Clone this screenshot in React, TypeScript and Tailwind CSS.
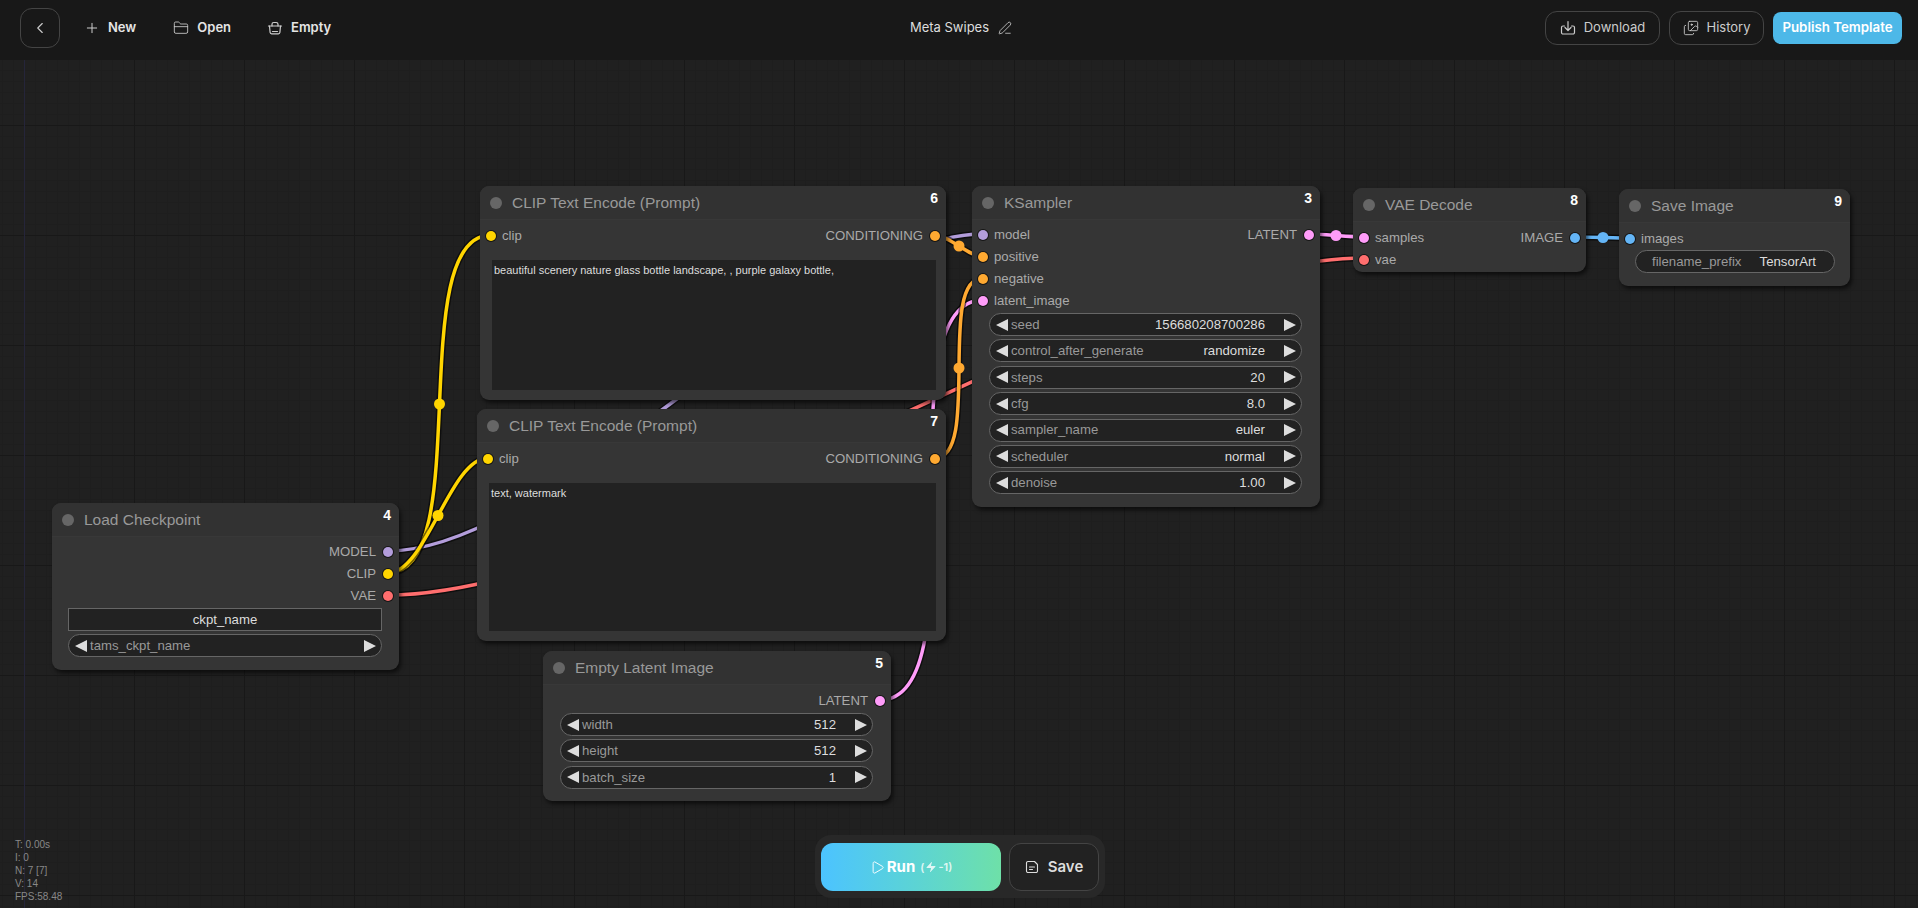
import React from 'react';
import { ChevronLeft, FolderClosed, Images, PenLine, Play, Plus, Zap } from 'lucide-react';

// link colours, by slot type
const MODEL = '#b39ddb';
const CLIP = '#ffd500';
const VAE = '#ff6e6e';
const COND = '#ffa931';
const LATENT = '#ff9cf9';
const IMAGE = '#64b5f6';

const links: { from: number[]; to: number[]; color: string }[] = [
  { from: [388, 551], to: [983, 234], color: MODEL },
  { from: [388, 595], to: [1364, 258], color: VAE },
  { from: [880, 700], to: [983, 300], color: LATENT },
  { from: [935, 458], to: [983, 278], color: COND },
  { from: [388, 573], to: [491, 235], color: CLIP },
  { from: [388, 573], to: [488, 458], color: CLIP },
  { from: [935, 235], to: [983, 257], color: COND },
  { from: [1308, 234], to: [1364, 237], color: LATENT },
  { from: [1575, 237], to: [1631, 238], color: IMAGE },
];

const Links = () => (
  <svg className="absolute left-0 top-0 w-[1918px] h-[848px]" viewBox="0 60 1918 848" fill="none">
    {links.map((l, i) => {
      const [x1, y1] = l.from;
      const [x2, y2] = l.to;
      const h = Math.hypot(x2 - x1, y2 - y1) * 0.25;
      const d = `M${x1} ${y1}C${x1 + h} ${y1} ${x2 - h} ${y2} ${x2} ${y2}`;
      return (
        <g key={i}>
          <path d={d} stroke="#000" strokeOpacity={0.55} strokeWidth={6.5} />
          <path d={d} stroke={l.color} strokeWidth={3.5} />
          <circle cx={(x1 + x2) / 2} cy={(y1 + y2) / 2} r={5.5} fill={l.color} />
        </g>
      );
    })}
  </svg>
);

const Dot = ({ color }: { color: string }) => (
  <span className={`w-[10px] h-[10px] shrink-0 rounded-full ring-1 ring-black/60 ${color}`} />
);

const Input = ({ label, color }: { label: string; color: string }) => (
  <div className="flex items-center gap-[6px] pl-[6px] text-[#aaa]">
    <Dot color={color} />
    <span>{label}</span>
  </div>
);

const Output = ({ label, color }: { label: string; color: string }) => (
  <div className="flex items-center gap-[7px] pr-[6px] ml-auto text-[#aaa]">
    <span>{label}</span>
    <Dot color={color} />
  </div>
);

const Row = ({ children }: { children: React.ReactNode }) => (
  <div className="flex items-center h-[22px]">{children}</div>
);

const Widget = ({ label, value }: { label: string; value?: string }) => (
  <div className="flex items-center h-[23px] shrink-0 rounded-full border border-[#666] bg-[#222] pl-[6px] pr-[5px]">
    <span className="w-0 h-0 border-y-[6px] border-y-transparent border-r-[12px] border-r-[#ddd]" />
    <span className="ml-[3px] text-[#999]">{label}</span>
    <span className="ml-auto mr-[19px] text-[#ddd]">{value}</span>
    <span className="w-0 h-0 border-y-[6px] border-y-transparent border-l-[12px] border-l-[#ddd]" />
  </div>
);

const Node = ({
  title,
  id,
  className,
  children,
}: {
  title: string;
  id: number;
  className: string;
  children: React.ReactNode;
}) => (
  <div
    className={`absolute flex flex-col rounded-[9px] bg-[#353535] text-[13.2px] leading-none shadow-[2px_3px_4px_rgba(0,0,0,0.6)] font-['Liberation_Sans',Arial,sans-serif] ${className}`}
  >
    <div className="relative flex items-center shrink-0 h-[34px] rounded-t-[9px] bg-[#323232] border-b border-[#383838] pl-[10px]">
      <span className="w-[12px] h-[12px] rounded-full bg-[#666]" />
      <span className="ml-[10px] text-[15.5px] text-[#999]">{title}</span>
      <span className="absolute right-[8px] top-[5px] text-[14px] font-bold text-white">{id}</span>
    </div>
    {children}
  </div>
);

const Prompt = ({ text }: { text: string }) => (
  <textarea
    readOnly
    value={text}
    className="flex-1 mt-[13px] ml-[12px] mr-[10px] mb-[10px] resize-none bg-[#222] px-[2px] py-[3px] text-[11px] leading-[14px] text-[#ddd] outline-none"
  />
);

const BasketIcon = () => (
  <svg width="16" height="16" viewBox="0 0 16 16" fill="none" stroke="currentColor" strokeWidth="1.2" strokeLinecap="round" strokeLinejoin="round">
    <path d="M5 6V4.2A1.7 1.7 0 0 1 6.7 2.5h2.6A1.7 1.7 0 0 1 11 4.2V6" />
    <path d="M1.5 6h13" />
    <path d="M2.5 6l.6 6.5a1.5 1.5 0 0 0 1.5 1.3h6.8a1.5 1.5 0 0 0 1.5-1.3l.6-6.5" />
    <path d="M5.5 11.5h5" />
  </svg>
);

const DownloadIcon = () => (
  <svg width="16" height="16" viewBox="0 0 16 16" fill="none" stroke="currentColor" strokeWidth="1.2" strokeLinecap="round" strokeLinejoin="round">
    <path d="M8 1.5v9M5 7.5l3 3 3-3" />
    <path d="M4.5 6H3a1.5 1.5 0 0 0-1.5 1.5v5A1.5 1.5 0 0 0 3 14h10a1.5 1.5 0 0 0 1.5-1.5v-5A1.5 1.5 0 0 0 13 6h-1.5" />
  </svg>
);

const SaveIcon = () => (
  <svg width="14" height="14" viewBox="0 0 14 14" fill="none" stroke="currentColor" strokeWidth="1.1" strokeLinecap="round" strokeLinejoin="round">
    <path d="M3 1.5h6.5l3 3V11a1.5 1.5 0 0 1-1.5 1.5H3A1.5 1.5 0 0 1 1.5 11V3A1.5 1.5 0 0 1 3 1.5z" />
    <path d="M4.5 7h5M4.5 9.5h3" />
  </svg>
);

const canvasGrid =
  'bg-[#202020] bg-[linear-gradient(to_right,#181818_1px,transparent_1px),linear-gradient(to_bottom,#181818_1px,transparent_1px),linear-gradient(to_right,#1e1e1e_1px,transparent_1px),linear-gradient(to_bottom,#1e1e1e_1px,transparent_1px)] bg-[size:110px_110px,110px_110px,11px_11px,11px_11px] bg-[position:24px_65px,24px_65px,2px_10px,2px_10px]';

export default function App() {
  return (
    <div className="flex flex-col h-screen overflow-hidden bg-[#202020] font-['Inter',sans-serif]">
      {/* Top bar */}
      <header className="grid grid-cols-[1fr_auto_1fr] items-center shrink-0 h-[60px] pb-1 pl-5 pr-4 bg-[#181818] text-[13px] text-[#e5e5e5]">
        <div className="flex items-center">
          <button className="flex items-center justify-center w-10 h-10 rounded-xl border border-[#444] text-[#ccc]">
            <ChevronLeft size={18} strokeWidth={1.5} />
          </button>
          <button className="flex items-center gap-2 ml-6 font-semibold">
            <Plus size={16} strokeWidth={1.5} className="text-[#ccc]" />
            New
          </button>
          <button className="flex items-center gap-2 ml-[37px] font-semibold">
            <FolderClosed size={16} strokeWidth={1.3} className="text-[#ccc]" />
            Open
          </button>
          <button className="flex items-center gap-2 ml-9 font-semibold">
            <span className="text-[#ccc]"><BasketIcon /></span>
            Empty
          </button>
        </div>
        <div className="flex items-center gap-[9px] text-[#ddd]">
          Meta Swipes
          <PenLine size={14} strokeWidth={1.3} />
        </div>
        <div className="flex items-center justify-end gap-[9px] text-[#ccc]">
          <button className="flex items-center gap-2 h-[34px] w-[115px] justify-center rounded-xl border border-[#444]">
            <DownloadIcon />
            Download
          </button>
          <button className="flex items-center gap-2 h-[34px] w-[95px] justify-center rounded-xl border border-[#444]">
            <Images size={16} strokeWidth={1.3} />
            History
          </button>
          <button className="h-8 w-[129px] self-start mt-[1px] rounded-lg bg-[#4db8e8] text-[13.3px] font-semibold text-white">
            Publish Template
          </button>
        </div>
      </header>

      {/* Graph canvas */}
      <main className={`relative flex-1 overflow-hidden ${canvasGrid}`}>
        <div className="absolute left-[24px] top-0 bottom-0 w-px bg-[#25253a]" />
        <Links />

        <Node title="CLIP Text Encode (Prompt)" id={6} className="left-[480px] top-[126px] w-[466px] h-[214px]">
          <div className="pt-[5px]">
            <Row>
              <Input label="clip" color="bg-[#ffd500]" />
              <Output label="CONDITIONING" color="bg-[#ffa931]" />
            </Row>
          </div>
          <Prompt text="beautiful scenery nature glass bottle landscape, , purple galaxy bottle," />
        </Node>

        <Node title="CLIP Text Encode (Prompt)" id={7} className="left-[477px] top-[349px] w-[469px] h-[232px]">
          <div className="pt-[5px]">
            <Row>
              <Input label="clip" color="bg-[#ffd500]" />
              <Output label="CONDITIONING" color="bg-[#ffa931]" />
            </Row>
          </div>
          <Prompt text="text, watermark" />
        </Node>

        <Node title="KSampler" id={3} className="left-[972px] top-[126px] w-[348px] h-[321px]">
          <div className="pt-1">
            <Row>
              <Input label="model" color="bg-[#b39ddb]" />
              <Output label="LATENT" color="bg-[#ff9cf9]" />
            </Row>
            <Row><Input label="positive" color="bg-[#ffa931]" /></Row>
            <Row><Input label="negative" color="bg-[#ffa931]" /></Row>
            <Row><Input label="latent_image" color="bg-[#ff9cf9]" /></Row>
          </div>
          <div className="flex flex-col gap-[3.4px] mt-[1px] pl-[17px] pr-[18px]">
            <Widget label="seed" value="156680208700286" />
            <Widget label="control_after_generate" value="randomize" />
            <Widget label="steps" value="20" />
            <Widget label="cfg" value="8.0" />
            <Widget label="sampler_name" value="euler" />
            <Widget label="scheduler" value="normal" />
            <Widget label="denoise" value="1.00" />
          </div>
        </Node>

        <Node title="Load Checkpoint" id={4} className="left-[52px] top-[443px] w-[347px] h-[167px]">
          <div className="pt-1">
            <Row><Output label="MODEL" color="bg-[#b39ddb]" /></Row>
            <Row><Output label="CLIP" color="bg-[#ffd500]" /></Row>
            <Row><Output label="VAE" color="bg-[#ff6e6e]" /></Row>
          </div>
          <div className="flex flex-col gap-[3px] mt-[1px] pl-[16px] pr-[17px]">
            <div className="flex items-center justify-center h-[23px] border border-[#666] bg-[#222] text-[#ddd]">ckpt_name</div>
            <Widget label="tams_ckpt_name" />
          </div>
        </Node>

        <Node title="Empty Latent Image" id={5} className="left-[543px] top-[591px] w-[348px] h-[150px]">
          <div className="pt-[5px]">
            <Row><Output label="LATENT" color="bg-[#ff9cf9]" /></Row>
          </div>
          <div className="flex flex-col gap-[3.4px] mt-[1px] pl-[17px] pr-[18px]">
            <Widget label="width" value="512" />
            <Widget label="height" value="512" />
            <Widget label="batch_size" value="1" />
          </div>
        </Node>

        <Node title="VAE Decode" id={8} className="left-[1353px] top-[128px] w-[233px] h-[84px]">
          <div className="pt-[5px]">
            <Row>
              <Input label="samples" color="bg-[#ff9cf9]" />
              <Output label="IMAGE" color="bg-[#64b5f6]" />
            </Row>
            <Row><Input label="vae" color="bg-[#ff6e6e]" /></Row>
          </div>
        </Node>

        <Node title="Save Image" id={9} className="left-[1619px] top-[129px] w-[231px] h-[97px]">
          <div className="pt-[5px]">
            <Row><Input label="images" color="bg-[#64b5f6]" /></Row>
          </div>
          <div className="flex items-center justify-between h-[23px] ml-[16px] mr-[15px] pl-[16px] pr-[18px] rounded-full border border-[#666] bg-[#222]">
            <span className="text-[#999]">filename_prefix</span>
            <span className="text-[#ddd]">TensorArt</span>
          </div>
        </Node>

        {/* Litegraph stats */}
        <div className="absolute left-[15px] bottom-[5px] text-[10px] leading-[13px] text-[#888] font-['Liberation_Sans',Arial,sans-serif]">
          <div>T: 0.00s</div>
          <div>I: 0</div>
          <div>N: 7 [7]</div>
          <div>V: 14</div>
          <div>FPS:58.48</div>
        </div>

        {/* Run bar */}
        <div className="absolute left-[815px] top-[775px] flex gap-2 w-[290px] h-[63px] pl-[6px] pt-2 rounded-2xl bg-[#282828]">
          <button className="flex items-center justify-center w-[180px] h-12 rounded-xl bg-gradient-to-r from-[#4cc3ff] to-[#6ee0a8] text-white">
            <Play size={15} strokeWidth={1.5} />
            <span className="ml-[2px] text-[15px] font-bold">Run</span>
            <span className="flex items-center ml-[5px] text-[11px] font-semibold opacity-80">
              (<Zap size={12} fill="currentColor" strokeWidth={0} className="mx-[1px]" /> -1)
            </span>
          </button>
          <button className="flex items-center justify-center gap-[9px] w-[90px] h-12 rounded-xl border border-[#444] bg-[#222] text-[15px] font-semibold text-[#ddd]">
            <SaveIcon />
            Save
          </button>
        </div>
      </main>
    </div>
  );
}
